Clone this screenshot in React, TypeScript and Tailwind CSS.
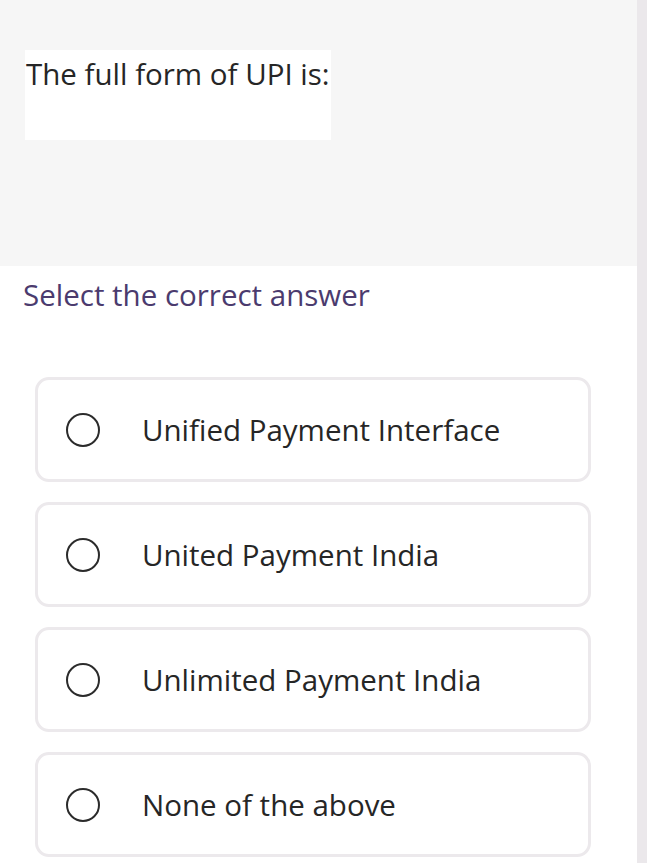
import { useState } from 'react'

const options = [
  'Unified Payment Interface',
  'United Payment India',
  'Unlimited Payment India',
  'None of the above',
]

const font = { fontFamily: '"Open Sans", "Noto Sans", sans-serif' }

export default function App() {
  const [picked, setPicked] = useState<number | null>(null)

  return (
    <div className="flex h-[863px] w-[647px] overflow-hidden bg-white" style={font}>
      <div className="flex w-[637px] flex-col">
        <div className="h-[266px] bg-[#f6f6f6] pl-[25px] pt-[50px]">
          <div className="h-[90px] w-[306px] bg-white pl-[1px] pt-[4px] text-[29.5px] leading-[40px] text-[#262626]">
            The full form of UPI is:
          </div>
        </div>

        <p className="pl-[23px] pt-[10px] text-[29.5px] leading-[38px] text-[#4b3b6e]">Select the correct answer</p>

        <div className="mt-[63px] flex flex-col gap-[20px] pl-[35px] pr-[46px]">
          {options.map((opt, i) => (
            <button
              key={opt}
              onClick={() => setPicked(i)}
              className="flex h-[105px] items-center rounded-[14px] border-[3px] border-[#ece9ec] bg-white pl-[28px] text-left"
            >
              <span className="flex h-[34px] w-[34px] shrink-0 items-center justify-center rounded-full border-2 border-[#2b2b2b]">
                {picked === i && <span className="h-[18px] w-[18px] rounded-full bg-[#2b2b2b]" />}
              </span>
              <span className="ml-[42px] text-[29.5px] leading-[40px] text-[#262626]">{opt}</span>
            </button>
          ))}
        </div>
      </div>
      <div className="w-[10px] bg-[#ebe8eb]" />
    </div>
  )
}
